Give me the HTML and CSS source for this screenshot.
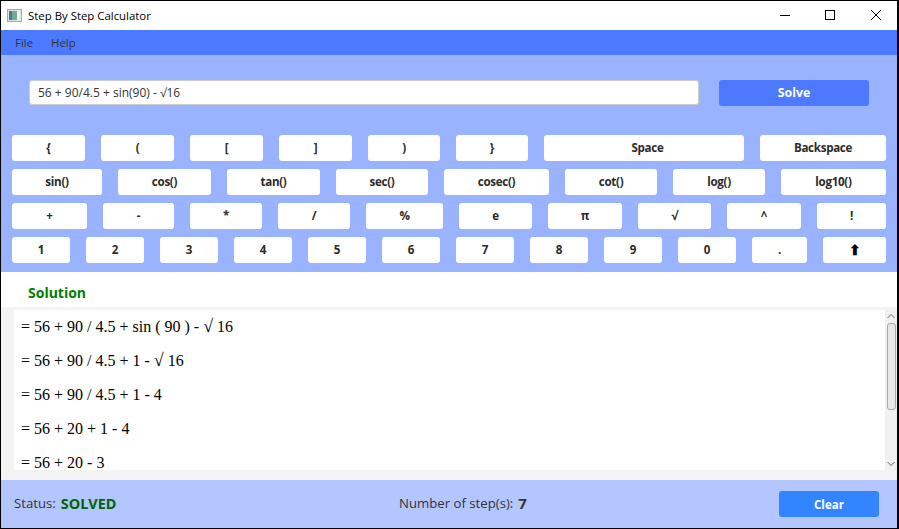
FILE: index.html
```html
<!DOCTYPE html>
<html lang="en">
<head>
<meta charset="utf-8">
<title>Step By Step Calculator</title>
<link rel="stylesheet" href="styles.css">
</head>
<body>
<div class="window">
  <header class="titlebar">
    <svg class="app-icon" width="16" height="13" viewBox="0 0 16 13"><rect x="0.5" y="0.5" width="14" height="12" fill="#e4e4e4" stroke="#a8a8a8"/><rect x="2" y="2" width="3" height="9" fill="#3f7f90"/><rect x="5" y="2" width="5" height="9" fill="#6fae96"/><rect x="10" y="2" width="3" height="9" fill="#eef2f2"/></svg>
    <span class="title">Step By Step Calculator</span>
    <div class="controls">
      <svg class="ctl" width="46" height="29" viewBox="0 0 46 29"><path d="M21 14.5h10" stroke="#000" fill="none"/></svg>
      <svg class="ctl" width="46" height="29" viewBox="0 0 46 29"><rect x="20.5" y="9.5" width="9" height="9" stroke="#000" fill="none"/></svg>
      <svg class="ctl" width="46" height="29" viewBox="0 0 46 29"><path d="M20 9l10 10M30 9l-10 10" stroke="#000" fill="none"/></svg>
    </div>
  </header>
  <nav class="menubar"><span>File</span><span>Help</span></nav>
  <section class="panel">
    <div class="input-row">
      <div class="expr">56 + 90/4.5 + sin(90) - √16</div>
      <button class="solve">Solve</button>
    </div>
    <div class="keys">
      <div class="row">
        <button class="k w73">{</button><button class="k w73">(</button><button class="k w73">[</button><button class="k w73">]</button><button class="k w72">)</button><button class="k w72">}</button><button class="k w200 space">Space</button><button class="k w126">Backspace</button>
      </div>
      <div class="row">
        <button class="k w90">sin()</button><button class="k w93">cos()</button><button class="k w93">tan()</button><button class="k w92">sec()</button><button class="k w105">cosec()</button><button class="k w92">cot()</button><button class="k w92">log()</button><button class="k w105">log10()</button>
      </div>
      <div class="row">
        <button class="k w75">+</button><button class="k w71">-</button><button class="k w72">*</button><button class="k w72">/</button><button class="k w77">%</button><button class="k w73">e</button><button class="k w74">π</button><button class="k w73">√</button><button class="k w74">^</button><button class="k w69">!</button>
      </div>
      <div class="row">
        <button class="k w58">1</button><button class="k w58">2</button><button class="k w58">3</button><button class="k w58">4</button><button class="k w58">5</button><button class="k w58">6</button><button class="k w58">7</button><button class="k w58">8</button><button class="k w58">9</button><button class="k w58">0</button><button class="k w55">.</button><button class="k w63 arrow">⬆</button>
      </div>
    </div>
  </section>
  <div class="sol-label">Solution</div>
  <section class="sol-wrap">
    <div class="sol-text">
      <p>= 56 + 90 / 4.5 + sin ( 90 ) - <span class="rad">√</span> 16</p>
      <p>= 56 + 90 / 4.5 + 1 - <span class="rad">√</span> 16</p>
      <p>= 56 + 90 / 4.5 + 1 - 4</p>
      <p>= 56 + 20 + 1 - 4</p>
      <p>= 56 + 20 - 3</p>
    </div>
    <div class="scrollbar">
      <svg width="12" height="13" viewBox="0 0 12 13"><path d="M2.5 8l3.5-3.5L9.5 8" stroke="#666" fill="none"/></svg>
      <div class="track"><div class="thumb"></div></div>
      <svg width="12" height="13" viewBox="0 0 12 13"><path d="M2.5 5l3.5 3.5L9.5 5" stroke="#666" fill="none"/></svg>
    </div>
  </section>
  <footer class="status">
    <div class="st-left"><span>Status:</span><strong>SOLVED</strong></div>
    <div class="st-mid"><span>Number of step(s):</span><strong>7</strong></div>
    <button class="clear">Clear</button>
  </footer>
</div>
</body>
</html>
```
FILE: styles.css
```css
* { box-sizing: border-box; }
html, body { margin: 0; padding: 0; background: #000; }
body { width: 899px; height: 529px; overflow: hidden; }
.window {
  width: 899px; height: 529px;
  border: solid #000; border-width: 1px 2px 1px 1px;
  background: #fff;
  display: flex; flex-direction: column;
  font-family: "Open Sans", "Noto Sans", sans-serif;
  font-size: 11.4px; color: #333;
}
.titlebar { height: 29px; display: flex; align-items: center; padding-left: 6px; background: #fff; flex: none; }
.app-icon { flex: none; }
.title { margin-left: 5px; color: #000; }
.controls { margin-left: auto; display: flex; }
.ctl { display: block; }
.menubar { height: 25px; background: #4d79ff; display: flex; align-items: center; gap: 18px; padding-left: 14px; flex: none; }
.menubar span { color: #333; }
.panel { height: 217px; background: #99b3ff; flex: none; display: flex; flex-direction: column; }
.input-row { display: flex; align-items: flex-start; gap: 20px; padding: 25px 0 0 28px; height: 80px; flex: none; }
.expr { width: 670px; height: 25px; background: #fff; border: 1px solid #ccc; border-radius: 3px; padding-left: 8px; line-height: 23px; font-size: 12px; color: #333; }
.solve { width: 150px; height: 26px; padding: 0 0 2px; background: #4d79ff; color: #fff; border: 0; border-radius: 3px; font: 700 12.4px "Open Sans", "Noto Sans", sans-serif; }
.keys { display: flex; flex-direction: column; gap: 8px; padding: 0 11px 0 11px; }
.row { display: flex; gap: 16px; height: 26px; }
.k { background: #fff; border: 0; border-radius: 3px; color: #2b2b2b; padding: 0 0 1px; min-width: 0; letter-spacing: -0.3px; font: 700 11.6px "Open Sans", "Noto Sans", sans-serif; }
.space { text-indent: 7px; }
.arrow { color: #000; font-size: 14px; }
.w55 { flex: 55 1 0; } .w58 { flex: 58 1 0; } .w63 { flex: 63 1 0; }
.w69 { flex: 69 1 0; } .w71 { flex: 71 1 0; } .w72 { flex: 72 1 0; }
.w73 { flex: 73 1 0; } .w74 { flex: 74 1 0; } .w75 { flex: 75 1 0; }
.w77 { flex: 77 1 0; } .w90 { flex: 90 1 0; } .w92 { flex: 92 1 0; }
.w93 { flex: 93 1 0; } .w105 { flex: 105 1 0; } .w126 { flex: 126 1 0; }
.w200 { flex: 200 1 0; }
.sol-label { height: 35px; flex: none; padding-left: 27px; line-height: 41px; font-size: 14px; font-weight: 700; color: #008000; background: #fff; }
.sol-wrap { height: 173px; flex: none; background: #f3f3f3; padding: 3px 0 10px 13px; display: flex; }
.sol-text { flex: 1; background: #fff; overflow: hidden; padding-left: 7px; font-family: "Liberation Serif", serif; font-size: 16px; color: #000; }
.sol-text p { margin: 0; height: 34px; line-height: 34px; white-space: nowrap; }
.rad { font-size: 18px; line-height: 1; }
.scrollbar { width: 12px; flex: none; background: #f0f0f0; display: flex; flex-direction: column; }
.scrollbar svg { display: block; flex: none; }
.track { flex: 1; padding-right: 1px; padding-left: 2px; }
.thumb { height: 87px; background: #e8e8e8; border: 1px solid #a8a8a8; border-radius: 3px; }
.status { flex: 1; background: #b3c6ff; display: flex; align-items: center; font-size: 13.2px; padding-left: 13px; padding-bottom: 2px; }
.st-left { display: flex; align-items: center; gap: 5px; width: 385px; }
.st-left strong { color: #006400; font-size: 14.4px; }
.st-mid { display: flex; align-items: center; gap: 5px; width: 380px; }
.st-mid strong { font-size: 15px; }
.clear { width: 100px; height: 26px; margin-top: 2px; background: #3385ff; color: #fff; border: 0; border-radius: 3px; font: 700 11.6px "Open Sans", "Noto Sans", sans-serif; }
```
